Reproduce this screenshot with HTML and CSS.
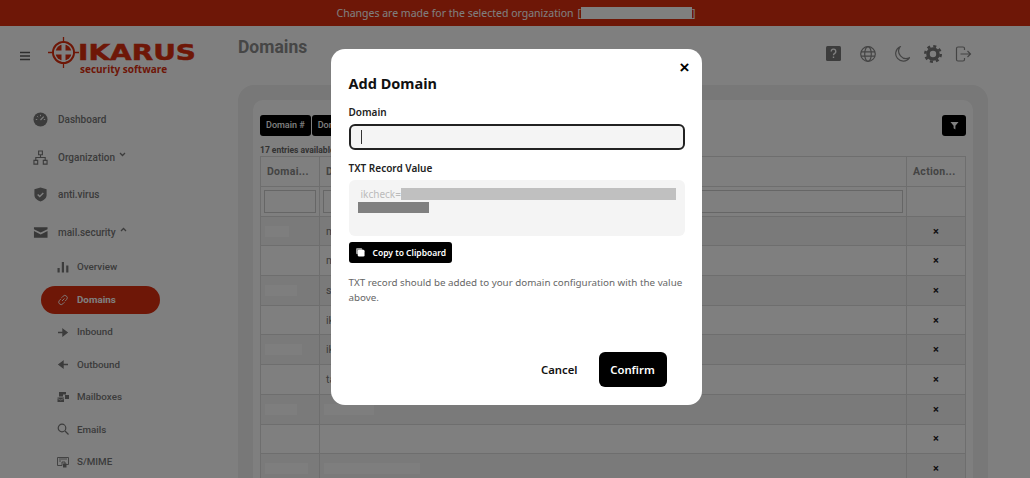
FILE: index.html
```html
<!DOCTYPE html>
<html lang="en">

<head>
    <meta charset="UTF-8">
    <meta name="viewport" content="width=device-width, initial-scale=1.0">
    <title>Domains</title>
    <link rel="stylesheet" href="styles.css">
</head>

<body>

    <!-- Organization banner -->
    <div class="banner">
        <span>Changes are made for the selected organization</span>
        <span class="banner-org">[<span class="banner-mask"></span>]</span>
    </div>

    <div class="app">

        <!-- Sidebar -->
        <aside class="sidebar">
            <div class="brand">
                <svg class="burger" viewBox="0 0 12 10"><path d="M1 1.500h10M1 5h10M1 8.500h10" stroke="#5c5c5c" stroke-width="1.300" fill="none"/></svg>
                <div class="logo">
                    <svg class="logo-mark" viewBox="0 0 31 31">
                        <circle cx="15.500" cy="15.500" r="10.500" fill="none" stroke="#dc2e0e" stroke-width="2"/>
                        <circle cx="15.500" cy="15.500" r="8" fill="#dc2e0e"/>
                        <path d="M15.500 6v19M6 15.500h19" stroke="#fff" stroke-width="4"/>
                        <path d="M15.500 0v6M15.500 25v6M0 15.500h6M25 15.500h6" stroke="#dc2e0e" stroke-width="1.300"/>
                    </svg>
                    <div class="logo-text">
                        <div class="logo-name">IKARUS</div>
                        <div class="logo-sub">security software</div>
                    </div>
                </div>
            </div>

            <nav class="nav">
                <div class="nav-item">
                    <svg class="nav-icon" viewBox="0 0 16 16"><circle cx="8" cy="8" r="7.500" fill="#787878"/><path d="M8 8.500l3.500-3.500" stroke="#fff" stroke-width="1.300"/><path d="M3 8h1.500M8 3v1.500M4.500 4.500l1 1M11.500 8H13" stroke="#fff" stroke-width="1"/></svg>
                    <span>Dashboard</span>
                </div>
                <div class="nav-item">
                    <svg class="nav-icon" viewBox="0 0 16 16"><path d="M6 1h4v4H6zM1 11h4v4H1zM11 11h4v4h-4zM8 5v3M3 11V8h10v3" fill="none" stroke="#787878" stroke-width="1.200"/></svg>
                    <span>Organization</span>
                    <svg class="caret" viewBox="0 0 7 5"><path d="M1 1l2.500 2.500L6 1" fill="none" stroke="#787878" stroke-width="1.300"/></svg>
                </div>
                <div class="nav-item">
                    <svg class="nav-icon" viewBox="0 0 16 16"><path d="M8 0.500l6.500 2v6c0 3.500-3 5.500-6.500 7-3.500-1.500-6.500-3.500-6.500-7v-6z" fill="#787878"/><path d="M5 8l2.200 2.200L11 6.500" fill="none" stroke="#fff" stroke-width="1.500"/></svg>
                    <span>anti.virus</span>
                </div>
                <div class="nav-item">
                    <svg class="nav-icon" viewBox="0 0 16 16"><path d="M1 2.500h14.500v2L8.200 8 1 4.500zM1 6.500L8.200 10l7.300-3.500v7H1z" fill="#707070"/></svg>
                    <span>mail.security</span>
                    <svg class="caret" viewBox="0 0 7 5"><path d="M1 4l2.500-2.500L6 4" fill="none" stroke="#787878" stroke-width="1.300"/></svg>
                </div>
            </nav>

            <nav class="subnav">
                <div class="sub-item">
                    <svg class="sub-icon" viewBox="0 0 12 12"><path d="M0.500 7h2.200v4.500H0.500zM4.800 1h2.200v10.500H4.800zM9.200 4.500h2.200v7H9.200z" fill="#787878"/></svg>
                    <span>Overview</span>
                </div>
                <div class="sub-item active">
                    <svg class="sub-icon" viewBox="0 0 12 12"><path d="M5 7l2.500-2.500M4.500 3.800l1.600-1.600a2.300 2.300 0 0 1 3.500 3.300L8 7.200M7.500 8.200L5.900 9.800a2.300 2.300 0 0 1-3.500-3.300L4 4.800" fill="none" stroke="#fff" stroke-width="0.900"/></svg>
                    <span>Domains</span>
                </div>
                <div class="sub-item">
                    <svg class="sub-icon" viewBox="0 0 12 12"><path d="M1 6.500h5M6 3.500l4 3-4 3z" fill="#787878" stroke="#787878" stroke-width="1.400"/></svg>
                    <span>Inbound</span>
                </div>
                <div class="sub-item">
                    <svg class="sub-icon" viewBox="0 0 12 12"><path d="M11 6.500H6M6 3.500l-4 3 4 3z" fill="#787878" stroke="#787878" stroke-width="1.400"/></svg>
                    <span>Outbound</span>
                </div>
                <div class="sub-item">
                    <svg class="sub-icon" viewBox="0 0 12 12"><path d="M2 1h7v2.500H6v2H2zM8 4h4v4H8zM0.500 6.500H7V11H0.500z" fill="#787878"/><path d="M0.500 7.500L3.700 9 7 7.500" fill="none" stroke="#fff" stroke-width="0.600"/></svg>
                    <span>Mailboxes</span>
                </div>
                <div class="sub-item">
                    <svg class="sub-icon" viewBox="0 0 12 12"><circle cx="5" cy="5" r="3.800" fill="none" stroke="#787878" stroke-width="1.200"/><path d="M8 8l3.500 3.500" stroke="#787878" stroke-width="1.300"/></svg>
                    <span>Emails</span>
                </div>
                <div class="sub-item">
                    <svg class="sub-icon" viewBox="0 0 12 12"><path d="M0.500 1.500h11v7H8V6H5v3.500H0.500z" fill="none" stroke="#787878" stroke-width="0.900"/><path d="M2 3h8M2 5h2" stroke="#787878" stroke-width="0.800"/><path d="M6 7.500h3.500v4H6z" fill="#787878"/></svg>
                    <span>S/MIME</span>
                </div>
            </nav>
        </aside>

        <!-- Main content -->
        <main class="main">
            <div class="topbar">
                <h1 class="page-title">Domains</h1>
                <div class="top-icons">
                    <svg class="top-help" viewBox="0 0 15 15"><rect width="15" height="15" rx="1.500" fill="#787878"/><path d="M5.200 5.400a2.300 2.300 0 1 1 3.500 2c-.8.500-1.200.900-1.200 1.800M7.500 10.500v1.500" fill="none" stroke="#fff" stroke-width="1.400"/></svg>
                    <svg class="top-globe" viewBox="0 0 16 16"><g fill="none" stroke="#888" stroke-width="1.200"><circle cx="8" cy="8" r="7.300"/><ellipse cx="8" cy="8" rx="3.300" ry="7.300"/><path d="M1 5.800h14M1 10.200h14"/></g></svg>
                    <svg class="top-moon" viewBox="0 0 16 16"><path d="M6 0.800a7.500 7.500 0 0 0 9.400 11A7.500 7.500 0 1 1 6 0.800z" fill="none" stroke="#888" stroke-width="1.200"/></svg>
                    <svg class="top-gear" viewBox="0 0 18 18"><circle cx="9" cy="9" r="7.700" fill="none" stroke="#787878" stroke-width="2.600" stroke-dasharray="3 3.050"/><circle cx="9" cy="9" r="5" fill="none" stroke="#787878" stroke-width="3.600"/></svg>
                    <svg class="top-exit" viewBox="0 0 16 16"><path d="M9 4V2.500A1.500 1.500 0 0 0 7.500 1h-5A1.500 1.500 0 0 0 1 2.500v11A1.500 1.500 0 0 0 2.500 15h5A1.500 1.500 0 0 0 9 13.500V12M5 8h10M12 5l3 3-3 3" fill="none" stroke="#888" stroke-width="1.200"/></svg>
                </div>
            </div>

            <div class="panel">
                <div class="card">
                    <div class="toolbar">
                        <div class="tabs">
                            <span class="tab">Domain #</span>
                            <span class="tab">Domain</span>
                        </div>
                        <span class="filter-btn">
                            <svg viewBox="0 0 10 10"><path d="M0.500 1h9L6 5.200V9.500L4 8V5.200z" fill="#fff"/></svg>
                        </span>
                    </div>
                    <div class="entries">17 entries available</div>
                    <table class="grid">
                        <colgroup>
                            <col class="col-id">
                            <col>
                            <col class="col-action">
                        </colgroup>
                        <tr class="head">
                            <th>Domai...</th>
                            <th>Domain</th>
                            <th class="th-action">Action...</th>
                        </tr>
                        <tr class="filters">
                            <td><span class="filter-box"></span></td>
                            <td><span class="filter-box"></span></td>
                            <td></td>
                        </tr>
                        <tr><td><span class="mask mask-s"></span></td><td>m</td><td class="x">&times;</td></tr>
                        <tr><td></td><td>m</td><td class="x">&times;</td></tr>
                        <tr><td><span class="mask mask-m"></span></td><td>s</td><td class="x">&times;</td></tr>
                        <tr><td></td><td>ik</td><td class="x">&times;</td></tr>
                        <tr><td><span class="mask mask-l"></span></td><td>ik</td><td class="x">&times;</td></tr>
                        <tr><td></td><td>ta</td><td class="x">&times;</td></tr>
                        <tr><td><span class="mask mask-m"></span></td><td><span class="mask mask-w1"></span></td><td class="x">&times;</td></tr>
                        <tr><td></td><td></td><td class="x">&times;</td></tr>
                        <tr><td><span class="mask mask-xl"></span></td><td><span class="mask mask-w2"></span></td><td class="x">&times;</td></tr>
                    </table>
                </div>
            </div>
        </main>
    </div>

    <!-- Add Domain dialog -->
    <div class="overlay">
        <div class="modal">
            <button class="modal-close">&times;</button>
            <h2 class="modal-title">Add Domain</h2>

            <label class="field-label">Domain</label>
            <div class="domain-input"><span class="cursor"></span></div>

            <label class="field-label txt-label">TXT Record Value</label>
            <div class="txt-value">
                <div class="txt-line">
                    <span class="txt-prefix">ikcheck=</span>
                    <span class="txt-mask"></span>
                </div>
                <span class="txt-mask2"></span>
            </div>

            <button class="copy-btn">
                <svg viewBox="0 0 10 10"><rect x="0" y="0" width="7" height="7" rx="1.500" fill="#999"/><rect x="2" y="2" width="7.500" height="7.500" rx="1.500" fill="#fff"/></svg>
                Copy to Clipboard
            </button>

            <p class="txt-hint">TXT record should be added to your domain configuration with the value above.</p>

            <div class="modal-actions">
                <button class="btn-cancel">Cancel</button>
                <button class="btn-confirm">Confirm</button>
            </div>
        </div>
    </div>

</body>
</html>
```

FILE: styles.css
```css
html, body {
    height: 100%;
}

body {
    margin: 0;
    background: #fff;
    color: #777;
    font-family: Roboto, sans-serif;
    overflow: hidden;
}

/* Banner */
.banner {
    height: 26px;
    background: #dc2e0e;
    color: #fff;
    font-family: "Noto Sans", sans-serif;
    font-size: 10.500px;
    display: flex;
    align-items: center;
    justify-content: center;
    gap: 4px;
    padding-left: 2px;
}

.banner-org {
    display: flex;
    align-items: center;
}

.banner-mask {
    width: 111px;
    height: 12px;
    background: #fff;
}

.app {
    display: flex;
    height: calc(100% - 26px);
    overflow: hidden;
}

/* Sidebar */
.sidebar {
    width: 238px;
    flex: none;
}

.brand {
    display: flex;
    align-items: flex-start;
    height: 75px;
    padding: 11px 0 0 19px;
    box-sizing: border-box;
}

.burger {
    width: 12px;
    height: 10px;
    margin-top: 14px;
}

.logo {
    display: flex;
    margin-left: 17px;
}

.logo-mark {
    width: 31px;
    height: 31px;
    flex: none;
}

.logo-text {
    margin-left: 1px;
}

.logo-name {
    font-family: "DejaVu Sans", sans-serif;
    font-weight: 700;
    font-size: 22px;
    line-height: 22px;
    margin: 5px 0 0 -2px;
    color: #dc2e0e;
    -webkit-text-stroke: 0.5px #dc2e0e;
    transform: scaleX(1.27);
    transform-origin: left;
}

.logo-sub {
    font-family: "Open Sans", sans-serif;
    font-weight: 700;
    font-size: 10px;
    line-height: 10px;
    color: #dc2e0e;
}

.nav {
    display: flex;
    flex-direction: column;
    padding-left: 33px;
}

.nav-item {
    display: flex;
    align-items: center;
    height: 37.500px;
    font-size: 10px;
    font-weight: 500;
}

.nav-icon {
    width: 15px;
    height: 15px;
    margin-right: 10px;
    flex: none;
}

.caret {
    width: 7px;
    height: 5px;
    margin: 0 0 6px 4px;
}

.subnav {
    display: flex;
    flex-direction: column;
    margin-top: 2px;
    margin-left: 41px;
    width: 119px;
}

.sub-item {
    display: flex;
    align-items: center;
    height: 28px;
    margin-bottom: 4.500px;
    padding: 0 0 1px 16px;
    box-sizing: border-box;
    font-size: 9.800px;
    font-weight: 500;
    border-radius: 14px;
}

.sub-item.active {
    padding-bottom: 0;
    background: #dc2e0e;
    color: #fff;
    font-weight: 700;
}

.sub-icon {
    width: 12px;
    height: 12px;
    margin-right: 8px;
    flex: none;
}

/* Main */
.main {
    flex: 1;
    min-width: 0;
    padding-right: 42px;
}

.topbar {
    display: flex;
    justify-content: space-between;
    height: 59px;
}

.page-title {
    margin: 11px 0 0;
    font-size: 17.500px;
    font-weight: 700;
    color: #8c8c8c;
}

.top-icons {
    display: flex;
    align-items: center;
    height: 55px;
    margin-right: 16px;
}

.top-help { width: 15px; height: 15px; }
.top-globe { width: 16px; height: 16px; margin-left: 19px; }
.top-moon { width: 16px; height: 16px; margin-left: 18px; }
.top-gear { width: 18px; height: 18px; margin-left: 14px; }
.top-exit { width: 17px; height: 16px; margin-left: 13px; }

.panel {
    background: #f0f0f0;
    border-radius: 16px 16px 0 0;
    padding: 15px 15px 0;
}

.card {
    background: #fff;
    border-radius: 10px 10px 0 0;
    padding: 15px 7px 0;
}

.toolbar {
    display: flex;
    justify-content: space-between;
    height: 21px;
}

.tabs {
    display: flex;
    gap: 1px;
}

.tab {
    background: #000;
    color: #fff;
    font-size: 9px;
    padding: 0 6px;
    line-height: 21px;
    border-radius: 3px;
    font-weight: 500;
}

.filter-btn {
    width: 24px;
    height: 21px;
    background: #000;
    border-radius: 3px;
    display: flex;
    align-items: center;
    justify-content: center;
}

.filter-btn svg {
    width: 9px;
    height: 9px;
}

.entries {
    font-size: 8.500px;
    font-weight: 700;
    color: #666;
    line-height: 10px;
    margin-top: 9px;
    height: 11px;
}

.grid {
    width: 100%;
    table-layout: fixed;
    border-collapse: collapse;
    font-size: 10.500px;
    color: #777;
}

.col-id { width: 59px; }
.col-action { width: 59px; }

.grid th,
.grid td {
    border: 1px solid #ddd;
    height: 29.700px;
    padding: 0 6px;
    box-sizing: border-box;
    overflow: hidden;
    white-space: nowrap;
}

.grid th {
    font-size: 10.500px;
    font-weight: 700;
    text-align: left;
    letter-spacing: 0.3px;
    color: #888;
}

.grid tr:nth-child(n+3):nth-child(odd) td {
    background: #f4f4f4;
}

.grid .filters td {
    padding: 3px;
}

.filter-box {
    display: block;
    height: 23px;
    border: 1px solid #ccc;
    box-sizing: border-box;
}

.grid .x {
    text-align: center;
    font-size: 11px;
    font-weight: 700;
    color: #222;
}

.mask {
    display: block;
    height: 11px;
    margin-left: -2px;
    background: #fcfcfc;
}

.mask-s { width: 24px; }
.mask-m { width: 32px; }
.mask-l { width: 37px; }
.mask-xl { width: 43px; }
.mask-w1 { width: 50px; }
.mask-w2 { width: 96px; }

/* Dialog */
.overlay {
    position: fixed;
    inset: 0;
    background: rgba(0, 0, 0, 0.5);
    display: flex;
    justify-content: center;
    align-items: flex-start;
    padding: 49px 0 0 2px;
    box-sizing: border-box;
}

.modal {
    position: relative;
    width: 371px;
    height: 356px;
    box-sizing: border-box;
    background: #fff;
    border-radius: 14px;
    padding: 23px 18px 0;
    font-family: "Noto Sans", sans-serif;
    color: #111;
    display: flex;
    flex-direction: column;
    align-items: flex-start;
}

.modal-close {
    position: absolute;
    top: 12px;
    right: 10px;
    width: 14px;
    height: 14px;
    padding: 0;
    border: none;
    background: none;
    font-size: 17px;
    line-height: 14px;
    font-weight: 700;
    color: #000;
}

.modal-title {
    margin: 0;
    font-size: 14.500px;
    line-height: 22px;
    font-weight: 700;
}

.field-label {
    font-size: 10px;
    font-weight: 600;
    line-height: 14px;
    margin-top: 11px;
    color: #222;
}

.domain-input {
    width: 336px;
    height: 26px;
    margin-top: 5px;
    box-sizing: border-box;
    background: #f4f4f4;
    border: 2px solid #222;
    border-radius: 6px;
    display: flex;
    align-items: center;
    padding-left: 10px;
}

.cursor {
    width: 1px;
    height: 14px;
    background: #333;
}

.txt-value {
    width: 336px;
    height: 56px;
    margin-top: 5px;
    padding: 8px 9px 0;
    box-sizing: border-box;
    background: #f4f4f4;
    border-radius: 6px;
}

.txt-line {
    display: flex;
    height: 12px;
    align-items: center;
    padding-left: 3px;
}

.txt-prefix {
    font-size: 10px;
    color: #bbb;
}

.txt-mask {
    flex: 1;
    height: 12px;
    background: #c0c0c0;
}

.txt-mask2 {
    display: block;
    width: 71px;
    height: 11px;
    margin-top: 2px;
    background: #808080;
}

.copy-btn {
    display: flex;
    align-items: center;
    gap: 8px;
    width: 103px;
    height: 21px;
    margin-top: 6px;
    padding: 0 0 0 7px;
    border: none;
    border-radius: 3px;
    background: #000;
    color: #fff;
    font-family: inherit;
    font-size: 8.500px;
    font-weight: 600;
}

.copy-btn svg {
    width: 9px;
    height: 9px;
    flex: none;
}

.txt-hint {
    margin: 12px 0 0;
    width: 336px;
    font-size: 9.800px;
    line-height: 15px;
    color: #666;
}

.modal-actions {
    margin-top: auto;
    margin-bottom: 18px;
    align-self: flex-end;
    display: flex;
    align-items: center;
    gap: 21px;
    padding-right: 17px;
}

.btn-cancel {
    border: none;
    background: none;
    padding: 0;
    font-family: inherit;
    font-size: 11.300px;
    font-weight: 600;
    color: #111;
}

.btn-confirm {
    width: 68px;
    height: 35px;
    border: none;
    border-radius: 6px;
    background: #000;
    color: #fff;
    font-family: inherit;
    font-size: 11.300px;
    font-weight: 600;
}
```
